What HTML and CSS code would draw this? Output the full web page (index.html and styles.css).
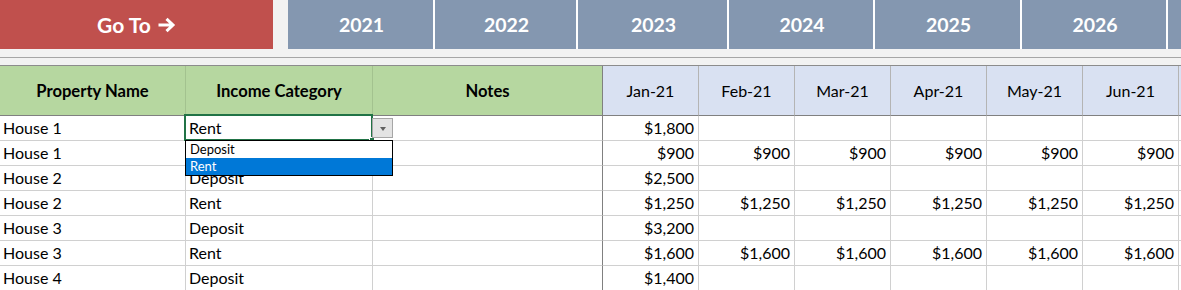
FILE: index.html
```html
<!DOCTYPE html>
<html>
<head>
<meta charset="utf-8">
<link rel="stylesheet" href="styles.css">
</head>
<body>
<div class="page">
  <div class="top">
    <div class="btnrow">
      <div class="goto">Go To <svg class="arrow" width="19" height="16" viewBox="0 0 19 16"><path d="M1.5 8 H16 M9.5 1.8 L16 8 L9.5 14.2" fill="none" stroke="#fff" stroke-width="3" stroke-linejoin="miter"/></svg></div>
      <div class="years">
        <div class="year w147">2021</div>
        <div class="year w143">2022</div>
        <div class="year w151">2023</div>
        <div class="year w146">2024</div>
        <div class="year w147">2025</div>
        <div class="year w146">2026</div>
        <div class="year rest"></div>
      </div>
    </div>
    <div class="rule"></div>
  </div>

  <div class="grid">
    <div class="hd g">Property Name</div>
    <div class="hd g">Income Category</div>
    <div class="hd g dk">Notes</div>
    <div class="hd m">Jan-21</div>
    <div class="hd m">Feb-21</div>
    <div class="hd m">Mar-21</div>
    <div class="hd m">Apr-21</div>
    <div class="hd m">May-21</div>
    <div class="hd m">Jun-21</div>
    <div class="hd m"></div>

    <div class="c">House 1</div><div class="c">Rent</div><div class="c dk"></div><div class="c n">$1,800</div><div class="c n"></div><div class="c n"></div><div class="c n"></div><div class="c n"></div><div class="c n"></div><div class="c"></div>
    <div class="c">House 1</div><div class="c"></div><div class="c dk"></div><div class="c n">$900</div><div class="c n">$900</div><div class="c n">$900</div><div class="c n">$900</div><div class="c n">$900</div><div class="c n">$900</div><div class="c"></div>
    <div class="c">House 2</div><div class="c">Deposit</div><div class="c dk"></div><div class="c n">$2,500</div><div class="c n"></div><div class="c n"></div><div class="c n"></div><div class="c n"></div><div class="c n"></div><div class="c"></div>
    <div class="c">House 2</div><div class="c">Rent</div><div class="c dk"></div><div class="c n">$1,250</div><div class="c n">$1,250</div><div class="c n">$1,250</div><div class="c n">$1,250</div><div class="c n">$1,250</div><div class="c n">$1,250</div><div class="c"></div>
    <div class="c">House 3</div><div class="c">Deposit</div><div class="c dk"></div><div class="c n">$3,200</div><div class="c n"></div><div class="c n"></div><div class="c n"></div><div class="c n"></div><div class="c n"></div><div class="c"></div>
    <div class="c">House 3</div><div class="c">Rent</div><div class="c dk"></div><div class="c n">$1,600</div><div class="c n">$1,600</div><div class="c n">$1,600</div><div class="c n">$1,600</div><div class="c n">$1,600</div><div class="c n">$1,600</div><div class="c"></div>
    <div class="c">House 4</div><div class="c">Deposit</div><div class="c dk"></div><div class="c n">$1,400</div><div class="c n"></div><div class="c n"></div><div class="c n"></div><div class="c n"></div><div class="c n"></div><div class="c"></div>
  </div>

  <div class="sel"><span class="handle"></span></div>
  <div class="ddbtn"><span class="tri"></span></div>
  <div class="ddlist">
    <div class="opt">Deposit</div>
    <div class="opt on">Rent</div>
  </div>
</div>
</body>
</html>
```

FILE: styles.css
```css
* { box-sizing: border-box; }
html, body { margin: 0; padding: 0; background: #fff; }
body { font-family: Lato, "Noto Sans", sans-serif; color: #000; overflow: hidden; }
.page { position: relative; width: 1181px; height: 290px; overflow: hidden; }

.top { background: #f2f2f2; height: 65px; }
.btnrow { display: flex; height: 49px; }
.goto {
  width: 273px; background: #c0504d; color: #fff;
  display: flex; align-items: center; justify-content: center; gap: 6px;
  font-weight: 700; font-size: 21px; padding-left: 0;
}
.arrow { display: block; margin-top: 1px; }
.years { display: flex; margin-left: 15px; flex: 1; }
.year {
  background: #8497b0; color: #fff; font-weight: 700; font-size: 19.5px;
  display: flex; align-items: center; justify-content: center;
  border-right: 2px solid #fff; padding-left: 2px;
}
.w147 { width: 147px; }
.w143 { width: 143px; }
.w151 { width: 151px; }
.w146 { width: 146px; }
.year.rest { flex: 1; border-right: 0; }
.rule { margin-top: 8px; border-top: 1px solid #a6a6a6; }

.grid {
  display: grid;
  grid-template-columns: 186px 187px 230px repeat(6, 96px) 1fr;
  grid-template-rows: 50px repeat(7, 25px);
  border-top: 1px solid #8c8c8c;
}
.hd {
  display: flex; align-items: center; justify-content: center;
  border-bottom: 1px solid #808080; font-size: 16px;
}
.hd.g { background: #b6d7a0; font-weight: 700; font-size: 16.6px; border-right: 1px solid #a3c28f; }
.hd.m { background: #d9e1f2; border-right: 1px solid #b4b4b4; }
.hd.g.dk { border-right: 1px solid #808080; }

.c {
  border-right: 1px solid #d0d0d0; border-bottom: 1px solid #d0d0d0;
  font-size: 16px; line-height: 24px; padding: 0 4px 0 3px;
  white-space: nowrap; overflow: hidden;
}
.c.dk { border-right: 1px solid #808080; }
.c.n { text-align: right; }

.sel {
  position: absolute; left: 184px; top: 114px; width: 189px; height: 27px;
  border: 2px solid #217346;
}
.handle {
  position: absolute; right: -4px; bottom: -4px; width: 6px; height: 6px;
  background: #217346; border: 1px solid #fff;
}
.ddbtn {
  position: absolute; left: 372px; top: 118px; width: 21px; height: 20px;
  border: 1px solid #a6a6a6; background: #e3e3e3;
  display: flex; align-items: center; justify-content: center;
}
.tri {
  width: 0; height: 0; border-left: 3.5px solid transparent; border-right: 3.5px solid transparent;
  border-top: 4px solid #606060; margin-top: 1px;
}
.ddlist {
  position: absolute; left: 185px; top: 140px; width: 208px; height: 36px;
  border: 1px solid #000; background: #fff; display: flex; flex-direction: column;
}
.opt { height: 17px; line-height: 17px; font-size: 13px; padding-left: 4px; }
.opt.on { background: #0078d7; color: #fff; }
```
